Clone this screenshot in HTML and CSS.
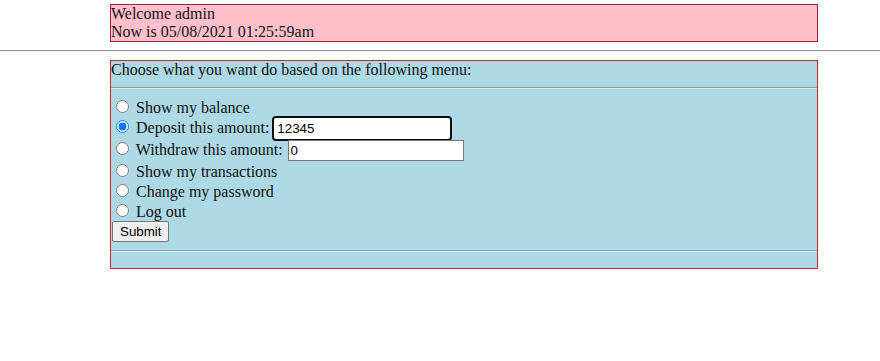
FILE: index.html
```html
<!DOCTYPE html>
<html lang="en">
<head>
  <meta charset="UTF-8">
  <title>Bank menu</title>
  <link rel="stylesheet" href="styles.css">
</head>
<body>
  <div class="welcome">
    Welcome admin<br>
    Now is 05/08/2021 01:25:59am
  </div>
  <hr>
  <div class="menu">
    Choose what you want do based on the following menu:
    <form>
      <hr>
      <input type="radio" name="action" value="balance"> Show my balance<br>
      <input type="radio" name="action" value="deposit" checked> Deposit this amount: <input type="text" class="amount focused" name="deposit" value="12345"><br>
      <input type="radio" name="action" value="withdraw"> Withdraw this amount: <input type="text" class="amount" name="withdraw" value="0"><br>
      <input type="radio" name="action" value="transactions"> Show my transactions<br>
      <input type="radio" name="action" value="password"> Change my password<br>
      <input type="radio" name="action" value="logout"> Log out<br>
      <input type="submit" value="Submit">
      <hr>
    </form>
  </div>
</body>
</html>
```
FILE: styles.css
```css
body {
  margin: 4px 0 0 0;
  font-family: "Liberation Serif", "Times New Roman", serif;
  font-size: 16px;
  color: #111;
}
hr {
  margin: 8px 0;
  border: none;
  border-top: 1px solid #9a9a9a;
  border-bottom: 1px solid #eeeeee;
}
.welcome {
  margin-left: 110px;
  width: 706px;
  background: pink;
  border: 1px solid #a8202e;
}
.menu {
  margin-left: 110px;
  width: 706px;
  background: lightblue;
  border: 1px solid #c8262e;
}
.menu form {
  margin: 0 0 16px 0;
}
.menu hr {
  border-top-color: #8f9ea4;
  border-bottom-color: #d6eef5;
}
input[type="radio"] {
  margin: 3px 3px 0 5px;
}
.amount {
  font-family: "Liberation Sans", Arial, sans-serif;
  font-size: 13.33px;
  width: 170px;
  padding: 2px 2px;
  margin-left: 1px;
  border: 1px solid #767676;
  background: #fff;
  color: #000;
}
.amount.focused {
  outline: 2px solid #101010;
  outline-offset: 0;
  border-radius: 2px;
  border-color: #fff;
}
input[type="submit"] {
  font-family: "Liberation Sans", Arial, sans-serif;
  font-size: 13.33px;
  margin: 0 0 0 1px;
  padding: 2px 7px;
  background: #efefef;
  border: 1px solid #767676;
  border-radius: 2px;
  color: #000;
}
```
